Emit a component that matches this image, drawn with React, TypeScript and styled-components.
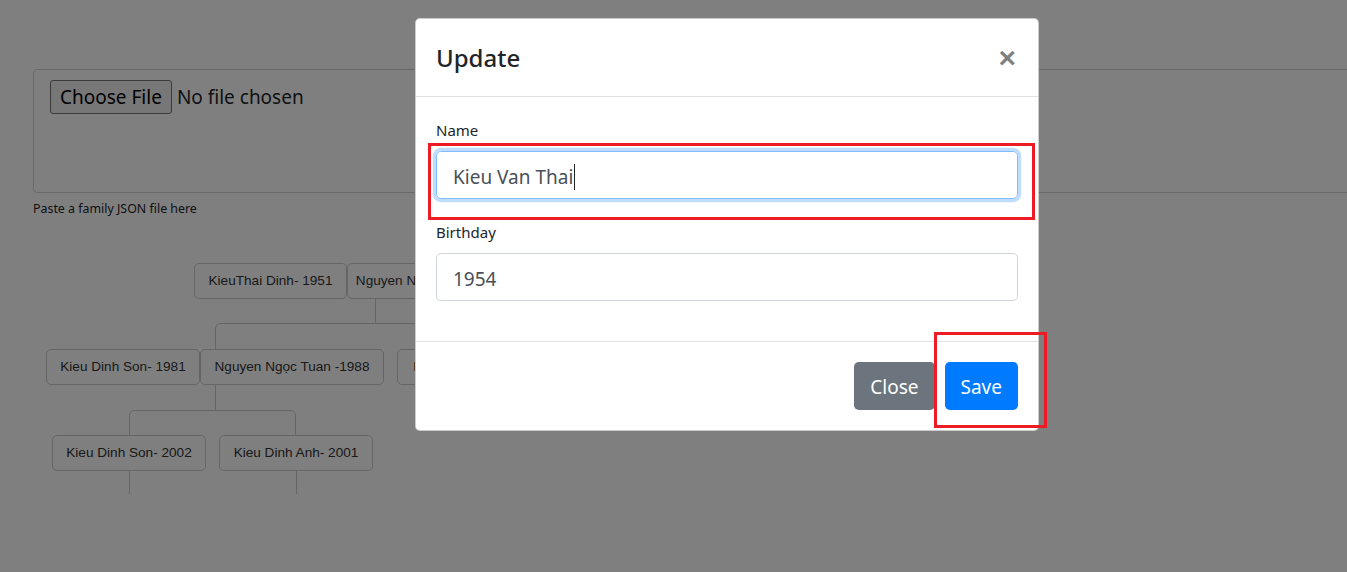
import React from "react";
import styled, { createGlobalStyle } from "styled-components";

interface TreeNode {
    label: string;
    x: number;
    y: number;
    w: number;
}

const nodes: TreeNode[] = [
    { label: "KieuThai Dinh- 1951", x: 194, y: 23, w: 153 },
    { label: "Nguyen Ngoc Lan- 1955", x: 347, y: 23, w: 165 },
    { label: "Kieu Dinh Son- 1981", x: 46, y: 109, w: 154 },
    { label: "Nguyen Ngọc Tuan -1988", x: 200, y: 109, w: 184 },
    { label: "Kieu Dinh Hai- 1984", x: 397, y: 109, w: 154 },
    { label: "Kieu Dinh Son- 2002", x: 52, y: 195, w: 154 },
    { label: "Kieu Dinh Anh- 2001", x: 219, y: 195, w: 154 },
];

const App: React.FC = () => {
    return (
        <Page>
            <GlobalStyle />
            <Top>
                <Dropzone>
                    <FileRow>
                        <ChooseButton type="button">Choose File</ChooseButton>
                        <FileName>No file chosen</FileName>
                    </FileRow>
                </Dropzone>
                <Hint>Paste a family JSON file here</Hint>
            </Top>

            <Tree>
                <Links width="1347" height="300">
                    <path d="M375.5 59 V83.5" />
                    <path d="M215.5 109 V89 Q215.5 83.5 221 83.5 H760" />
                    <path d="M215.5 145 V170.5" />
                    <path d="M129.5 195 V176 Q129.5 170.5 135 170.5 H290 Q295.5 170.5 295.5 176 V195" />
                    <path d="M129.5 229 V254" />
                    <path d="M296.5 229 V254" />
                </Links>
                {nodes.map(node => (
                    <Node key={node.label} $x={node.x} $y={node.y} $w={node.w}>
                        {node.label}
                    </Node>
                ))}
            </Tree>

            <Backdrop>
                <Dialog>
                    <Header>
                        <Title>Update</Title>
                        <CloseX type="button">×</CloseX>
                    </Header>
                    <Body>
                        <Group>
                            <Label>Name</Label>
                            <Field $focused>
                                Kieu Van Thai
                                <Caret />
                            </Field>
                        </Group>
                        <Group>
                            <Label>Birthday</Label>
                            <Field>1954</Field>
                        </Group>
                    </Body>
                    <Footer>
                        <Button type="button" $variant="secondary">Close</Button>
                        <Button type="button" $variant="primary">Save</Button>
                    </Footer>
                </Dialog>
            </Backdrop>

            <Mark $x={428} $y={143} $w={607} $h={77} />
            <Mark $x={934} $y={332} $w={113} $h={96} />
        </Page>
    );
};

const GlobalStyle = createGlobalStyle`
    html, body {
        margin: 0;
        padding: 0;
        background: #fff;
    }
    body {
        font-family: "Noto Sans", "Open Sans", sans-serif;
        color: #212529;
        overflow: hidden;
    }
`;

const Page = styled.div`
    position: relative;
    width: 1347px;
    height: 572px;
    overflow: hidden;
`;

const Top = styled.div`
    padding: 69px 0 0 33px;
`;

const Dropzone = styled.div`
    width: 1400px;
    height: 124px;
    box-sizing: border-box;
    border: 1px solid #ced4da;
    border-radius: 4px;
    padding: 10px 16px;
`;

const FileRow = styled.div`
    display: flex;
    align-items: center;
    gap: 5px;
`;

const ChooseButton = styled.button`
    height: 34px;
    padding: 0 9px;
    font-family: "Noto Sans", "Open Sans", sans-serif;
    font-size: 19px;
    color: #000;
    background: #efefef;
    border: 1px solid #767676;
    border-radius: 3px;
`;

const FileName = styled.span`
    font-size: 19px;
    color: #212529;
`;

const Hint = styled.div`
    margin-top: 6px;
    font-size: 12.4px;
    line-height: 19px;
`;

const Tree = styled.div`
    position: relative;
    margin-top: 22px;
    height: 300px;
`;

const Links = styled.svg`
    position: absolute;
    left: 0;
    top: 0;
    fill: none;
    stroke: #ccc;
    stroke-width: 1;
`;

const Node = styled.div<{ $x: number; $y: number; $w: number }>`
    position: absolute;
    left: ${p => p.$x}px;
    top: ${p => p.$y}px;
    width: ${p => p.$w}px;
    height: 36px;
    box-sizing: border-box;
    display: flex;
    align-items: center;
    justify-content: center;
    padding-bottom: 1px;
    white-space: nowrap;
    border: 1px solid #ccc;
    border-radius: 5px;
    background: #fff;
    font-family: "Liberation Sans", Arial, sans-serif;
    font-size: 13.6px;
    color: #333;
`;

const Backdrop = styled.div`
    position: absolute;
    inset: 0;
    background: rgba(0, 0, 0, 0.5);
    padding: 18px 0 0 415px;
    box-sizing: border-box;
`;

const Dialog = styled.div`
    width: 624px;
    box-sizing: border-box;
    background: #fff;
    border: 1px solid rgba(0, 0, 0, 0.2);
    border-radius: 5px;
`;

const Header = styled.div`
    display: flex;
    align-items: center;
    justify-content: space-between;
    padding: 21px 20px 20px;
    border-bottom: 1px solid #dee2e6;
`;

const Title = styled.h4`
    margin: 0;
    font-size: 24px;
    font-weight: 500;
    line-height: 36px;
    color: #212529;
`;

const CloseX = styled.button`
    margin-right: 2px;
    padding: 0;
    border: none;
    background: transparent;
    font-family: "Liberation Sans", Arial, sans-serif;
    font-size: 30px;
    font-weight: 700;
    line-height: 1;
    color: rgba(0, 0, 0, 0.5);
`;

const Body = styled.div`
    padding: 21px 20px 19px;
`;

const Group = styled.div`
    margin-bottom: 21px;
`;

const Label = styled.label`
    display: block;
    margin-bottom: 9px;
    font-size: 15px;
    line-height: 24px;
    color: #212529;
`;

const Field = styled.div<{ $focused?: boolean }>`
    height: 48px;
    box-sizing: border-box;
    display: flex;
    align-items: center;
    padding: 3px 16px 0;
    border: 1px solid ${p => (p.$focused ? "#80bdff" : "#ced4da")};
    border-radius: 4.8px;
    box-shadow: ${p => (p.$focused ? "0 0 0 3.2px rgba(0, 123, 255, 0.25)" : "none")};
    font-size: 19px;
    color: #495057;
`;

const Caret = styled.span`
    display: inline-block;
    width: 1px;
    height: 26px;
    margin-left: 1px;
    background: #212529;
`;

const Footer = styled.div`
    display: flex;
    justify-content: flex-end;
    gap: 10px;
    padding: 20px;
    border-top: 1px solid #dee2e6;
`;

const Button = styled.button<{ $variant: "primary" | "secondary" }>`
    height: 48px;
    padding: 2px 16px 0;
    border: none;
    border-radius: 4.8px;
    font-family: "Noto Sans", "Open Sans", sans-serif;
    font-size: 19px;
    color: #fff;
    background: ${p => (p.$variant === "primary" ? "#007bff" : "#6c757d")};
`;

const Mark = styled.div<{ $x: number; $y: number; $w: number; $h: number }>`
    position: absolute;
    left: ${p => p.$x}px;
    top: ${p => p.$y}px;
    width: ${p => p.$w}px;
    height: ${p => p.$h}px;
    box-sizing: border-box;
    border: 3px solid #ed1c24;
`;

export default App;
